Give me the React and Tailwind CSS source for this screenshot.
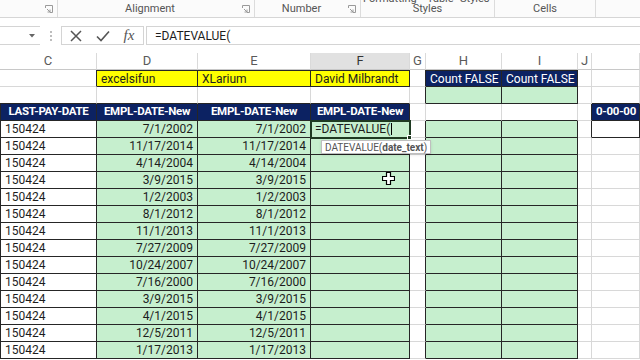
import React from "react";

const cols = ["C", "D", "E", "F", "G", "H", "I", "J", "K"];

const dates = [
  "7/1/2002",
  "11/17/2014",
  "4/14/2004",
  "3/9/2015",
  "1/2/2003",
  "8/1/2012",
  "11/1/2013",
  "7/27/2009",
  "10/24/2007",
  "7/16/2000",
  "3/9/2015",
  "4/1/2015",
  "12/5/2011",
  "1/17/2013",
];

const ROWS = 3 + dates.length;

// which cells carry the dark cell borders
const isBoxed = (r, c) => {
  if (r < 0 || c < 0 || r >= ROWS || c >= cols.length) return false;
  if (r === 0) return [1, 2, 3, 5, 6].includes(c);
  if (r === 1) return [5, 6].includes(c);
  if (r === 2) return [0, 1, 2, 3, 8].includes(c);
  if (r === 3 && c === 8) return true;
  return [0, 1, 2, 3, 5, 6].includes(c);
};

const getCell = (r, c) => {
  if (r === 0) {
    if (c === 1) return { fill: "yellow", text: "excelsifun", align: "left" };
    if (c === 2) return { fill: "yellow", text: "XLarium", align: "left" };
    if (c === 3) return { fill: "yellow", text: "David Milbrandt", align: "left" };
    if (c === 5 || c === 6) return { fill: "navy", text: "Count FALSE", align: "left" };
    return { fill: "white" };
  }
  if (r === 1) {
    if (c === 5 || c === 6) return { fill: "green" };
    return { fill: "white" };
  }
  if (r === 2) {
    if (c === 0) return { fill: "navy", text: "LAST-PAY-DATE", align: "center", bold: true };
    if (c >= 1 && c <= 3) return { fill: "navy", text: "EMPL-DATE-New", align: "center", bold: true };
    if (c === 8) return { fill: "navy", text: "0-00-00", align: "left", bold: true };
    return { fill: "white" };
  }
  const d = dates[r - 3];
  if (c === 0) return { fill: "white", text: "150424", align: "left" };
  if (c === 1 || c === 2) return { fill: "green", text: d, align: "right" };
  if (c === 3) return { fill: "green", text: r === 3 ? "=DATEVALUE(" : "", align: "left", editing: r === 3 };
  if (c === 5 || c === 6) return { fill: "green" };
  return { fill: "white" };
};

const fillClass = {
  white: "bg-white text-[#1d1d1d]",
  yellow: "bg-[#ffff00] text-[#1d1d1d]",
  navy: "bg-[#0c2262] text-white",
  green: "bg-[#c6efce] text-[#1d1d1d]",
};

const alignClass = {
  left: "justify-start pl-[4px]",
  center: "justify-center",
  right: "justify-end pr-[4px]",
};

const Cell = ({ r, c }) => {
  const cell = getCell(r, c);
  const boxed = isBoxed(r, c);
  const rightDark = boxed || isBoxed(r, c + 1);
  const bottomDark = boxed || isBoxed(r + 1, c);

  return (
    <div
      className={`flex h-[17px] items-center overflow-hidden whitespace-nowrap border-r border-b ${
        rightDark ? "border-r-[#262626]" : "border-r-[#d8d8d8]"
      } ${bottomDark ? "border-b-[#262626]" : "border-b-[#d8d8d8]"} ${
        boxed && r === 0 ? "border-t border-t-[#262626]" : ""
      } ${boxed && c === 0 ? "border-l border-l-[#262626]" : ""} ${fillClass[cell.fill]} ${
        alignClass[cell.align || "left"]
      } ${cell.bold ? "text-[11.5px] font-bold tracking-[-0.3px]" : ""}`}
    >
      {cell.text}
      {cell.editing && <span className="ml-[1px] inline-block h-[12px] w-px bg-black" />}
    </div>
  );
};

const Launcher = () => (
  <svg width="8" height="8" viewBox="0 0 8 8" className="shrink-0">
    <path d="M0.5 3 V0.5 H7.5 V7.5 H5" fill="none" stroke="#9a9a9a" strokeWidth="1" />
    <path d="M2 4 L5 7 M5 4.5 V7 H2.5" fill="none" stroke="#9a9a9a" strokeWidth="1" />
  </svg>
);

const RibbonGroup = ({ width, label, launcher, children }) => (
  <div className={`relative flex h-full shrink-0 items-end border-r border-[#dcdcdc] pb-[1px] ${width}`}>
    {children}
    <span className="flex-1 text-center leading-[14px]">{label}</span>
    {launcher && (
      <span className="mb-[3px] mr-[4px]">
        <Launcher />
      </span>
    )}
  </div>
);

export default function App() {
  return (
    <div className="relative h-[360px] w-[640px] overflow-hidden bg-white font-['Roboto',sans-serif] text-[12px]">
      {/* ribbon group labels */}
      <div className="flex h-[18px] border-b border-[#d6d6d6] bg-[#fbfbfb] text-[11px] text-[#555]">
        <RibbonGroup width="w-[58px]" label="" launcher />
        <RibbonGroup width="w-[197px]" label="Alignment" launcher />
        <RibbonGroup width="w-[106px]" label="Number" launcher />
        <RibbonGroup width="w-[134px]" label="Styles">
          <div className="absolute left-[2px] top-[-8px] flex text-[11px] leading-[13px] text-[#555]">
            <span className="w-[64px]">Formatting</span>
            <span className="w-[33px]">Table</span>
            <span>Styles</span>
          </div>
        </RibbonGroup>
        <RibbonGroup width="w-[101px]" label="Cells" />
        <div className="flex-1" />
      </div>

      {/* formula bar */}
      <div className="h-[27px] pt-[8px]">
        <div className="flex h-[19px] items-stretch">
          <div className="flex w-[40px] items-center justify-end border-y border-[#d4d4d4] pr-[5px]">
            <svg width="6" height="4" viewBox="0 0 6 4">
              <path d="M0 0 H6 L3 3.5 Z" fill="#666" />
            </svg>
          </div>
          <div className="flex w-[21px] items-center justify-center">
            <svg width="2" height="10" viewBox="0 0 2 10">
              <rect x="0" y="0" width="2" height="2" fill="#bdbdbd" />
              <rect x="0" y="4" width="2" height="2" fill="#bdbdbd" />
              <rect x="0" y="8" width="2" height="2" fill="#bdbdbd" />
            </svg>
          </div>
          <div className="flex w-[83px] items-center border border-[#d4d4d4] bg-white">
            <span className="flex w-[28px] justify-center">
              <svg width="12" height="12" viewBox="0 0 12 12">
                <path d="M1 1 L11 11 M11 1 L1 11" stroke="#555" strokeWidth="1.5" />
              </svg>
            </span>
            <span className="flex w-[25px] justify-center">
              <svg width="14" height="12" viewBox="0 0 14 12">
                <path d="M1 6.5 L5 10.5 L13 1.5" fill="none" stroke="#555" strokeWidth="1.6" />
              </svg>
            </span>
            <span className="flex w-[28px] justify-center font-['Liberation_Serif',serif] text-[15px] italic leading-none text-[#555]">
              fx
            </span>
          </div>
          <div className="ml-[2px] flex flex-1 items-center border border-r-0 border-[#d4d4d4] pl-[8px] text-[12px] text-[#1d1d1d]">
            =DATEVALUE(
          </div>
        </div>
      </div>

      {/* gap above column headers */}
      <div className="h-[8px]" />

      {/* column headers */}
      <div className="grid grid-cols-[97px_101px_113px_99px_16px_76px_76px_14px_48px] text-[13px] text-[#5a5a5a]">
        {cols.map((col) => (
          <div
            key={col}
            className={`flex h-[17px] items-center justify-center border-r border-b border-r-[#dadada] border-b-[#c8c8c8] ${
              col === "F" ? "bg-[#e1e1e1] text-[#333]" : "bg-white"
            }`}
          >
            {col === "K" ? "" : col}
          </div>
        ))}
      </div>

      {/* sheet cells */}
      <div className="grid grid-cols-[97px_101px_113px_99px_16px_76px_76px_14px_48px]">
        {Array.from({ length: ROWS }).map((_, r) =>
          cols.map((col, c) => <Cell key={`${r}-${col}`} r={r} c={c} />)
        )}
      </div>

      {/* active cell outline + fill handle on F4 */}
      <div className="pointer-events-none absolute left-[310px] top-[120px] h-[19px] w-[101px] border-2 border-[#1f3a22]" />
      <div className="absolute left-[407px] top-[135px] h-[5px] w-[5px] border border-white bg-[#1f3a22]" />

      {/* function tooltip */}
      <div className="absolute left-[321px] top-[140px] flex h-[14px] items-center border border-[#bfbfbf] bg-white px-[3px] text-[10px] text-[#555] shadow-sm">
        DATEVALUE(<span className="font-bold">date_text</span>)
      </div>

      {/* mouse cursor */}
      <svg className="absolute left-[382px] top-[172px]" width="13" height="13" viewBox="0 0 13 13">
        <path
          d="M4.5 0.5 H8.5 V4.5 H12.5 V8.5 H8.5 V12.5 H4.5 V8.5 H0.5 V4.5 H4.5 Z"
          fill="white"
          stroke="black"
          strokeWidth="1.2"
        />
      </svg>
    </div>
  );
}
